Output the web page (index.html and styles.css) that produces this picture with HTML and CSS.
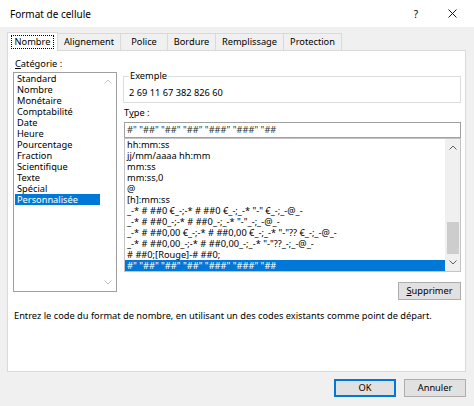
FILE: index.html
```html
<!DOCTYPE html>
<html lang="fr">
<head>
<meta charset="utf-8">
<title>Format de cellule</title>
<link rel="stylesheet" href="styles.css">
</head>
<body>
<div class="titlebar">
  <span class="title">Format de cellule</span>
  <span class="help">?</span>
  <svg class="close" width="9" height="9" viewBox="0 0 9 9"><path d="M0.5 0.5 L8.5 8.5 M8.5 0.5 L0.5 8.5" stroke="#1a1a1a" stroke-width="1" fill="none"/></svg>
</div>
<div class="tabs">
  <div class="tab active"><span class="focus">Nombre</span></div>
  <div class="tab t2">Alignement</div>
  <div class="tab t3">Police</div>
  <div class="tab t4">Bordure</div>
  <div class="tab t5">Remplissage</div>
  <div class="tab t6">Protection</div>
</div>
<div class="panel">
  <div class="top">
    <div class="leftcol">
      <div class="label"><u>C</u>atégorie :</div>
      <div class="catlist">
        <div class="catitems">
          <div class="item">Standard</div>
          <div class="item">Nombre</div>
          <div class="item">Monétaire</div>
          <div class="item">Comptabilité</div>
          <div class="item">Date</div>
          <div class="item">Heure</div>
          <div class="item">Pourcentage</div>
          <div class="item">Fraction</div>
          <div class="item">Scientifique</div>
          <div class="item">Texte</div>
          <div class="item">Spécial</div>
          <div class="item sel">Personnalisée</div>
        </div>
        <div class="vscroll light">
          <div class="arrow"><svg width="8" height="5" viewBox="0 0 8 5"><path d="M0.5 4.5 L4 1 L7.5 4.5" stroke="#c4c4c4" fill="none"/></svg></div>
          <div class="arrow"><svg width="8" height="5" viewBox="0 0 8 5"><path d="M0.5 0.5 L4 4 L7.5 0.5" stroke="#c4c4c4" fill="none"/></svg></div>
        </div>
      </div>
    </div>
    <div class="rightcol">
      <div class="example">
        <span class="legend">Exemple</span>
        <div class="sample">2 69 11 67 382 826 60</div>
      </div>
      <div class="label type">T<u>y</u>pe :</div>
      <div class="typeinput">#" "##" "##" "##" "###" "###" "##</div>
      <div class="fmtlist">
        <div class="fmtitems">
          <div class="row">hh:mm:ss</div>
          <div class="row">jj/mm/aaaa hh:mm</div>
          <div class="row">mm:ss</div>
          <div class="row">mm:ss,0</div>
          <div class="row">@</div>
          <div class="row">[h]:mm:ss</div>
          <div class="row">_-* # ##0 €_-;-* # ##0 €_-;_-* "-" €_-;_-@_-</div>
          <div class="row">_-* # ##0_-;-* # ##0_-;_-* "-"_-;_-@_-</div>
          <div class="row">_-* # ##0,00 €_-;-* # ##0,00 €_-;_-* "-"?? €_-;_-@_-</div>
          <div class="row">_-* # ##0,00_-;-* # ##0,00_-;_-* "-"??_-;_-@_-</div>
          <div class="row"># ##0;[Rouge]-# ##0;</div>
          <div class="row sel">#" "##" "##" "##" "###" "###" "##</div>
        </div>
        <div class="vscroll">
          <div class="arrow"><svg width="8" height="5" viewBox="0 0 8 5"><path d="M0.5 4.5 L4 1 L7.5 4.5" stroke="#606060" fill="none"/></svg></div>
          <div class="track"><div class="thumb"></div></div>
          <div class="arrow"><svg width="8" height="5" viewBox="0 0 8 5"><path d="M0.5 0.5 L4 4 L7.5 0.5" stroke="#606060" fill="none"/></svg></div>
        </div>
      </div>
      <div class="btnrow"><button class="btn del"><u>S</u>upprimer</button></div>
    </div>
  </div>
  <div class="desc">Entrez le code du format de nombre, en utilisant un des codes existants comme point de départ.</div>
</div>
<div class="footer">
  <button class="btn ok">OK</button>
  <button class="btn">Annuler</button>
</div>
</body>
</html>
```

FILE: styles.css
```css
* { box-sizing: border-box; }
html, body { margin: 0; padding: 0; }
body {
  width: 474px;
  height: 406px;
  overflow: hidden;
  background: #f0f0f0;
  font-family: "Noto Sans", "Open Sans", sans-serif;
  font-size: 9.25px;
  color: #000;
  line-height: 12px;
}
u { text-decoration: underline; text-underline-offset: 1px; }

.titlebar {
  height: 27px;
  background: #fff;
  display: flex;
  align-items: center;
  padding-left: 10px;
}
.title { flex: 1; font-size: 10px; }
.help { font-size: 10px; margin-right: 30px; }
.close { margin-right: 17px; }

.tabs {
  display: flex;
  align-items: flex-start;
  height: 18px;
  margin: 6px 0 -1px 7px;
  position: relative;
  z-index: 1;
}
.tab {
  height: 17px;
  border: 1px solid #d9d9d9;
  border-left: none;
  border-bottom: none;
  background: #f0f0f0;
  display: flex;
  align-items: center;
  justify-content: center;
  line-height: 12px;
}
.tab.active {
  width: 51px;
  height: 19px;
  margin-top: -1px;
  border-left: 1px solid #d9d9d9;
  background: #fff;
}
.focus {
  border: 1px dotted #000;
  padding: 0 3px;
  height: 14px;
  line-height: 12px;
}
.t2 { width: 63px; }
.t3 { width: 47px; }
.t4 { width: 48px; }
.t5 { width: 68px; }
.t6 { width: 58px; }

.panel {
  margin-left: 7px;
  width: 459px;
  height: 322px;
  background: #fff;
  border: 1px solid #d9d9d9;
}
.top {
  display: flex;
  align-items: flex-start;
  padding: 7px 0 0 5px;
}
.label { line-height: 12px; padding-left: 2px; }

.catlist {
  margin-top: 2px;
  width: 104px;
  height: 220px;
  border: 1px solid #a0a0a0;
  display: flex;
}
.catitems { width: 86px; padding-left: 1px; }
.item { height: 11px; line-height: 11px; padding-left: 2px; white-space: nowrap; }
.item.sel { background: #0078d7; color: #fff; }

.vscroll {
  width: 16px;
  display: flex;
  flex-direction: column;
  justify-content: space-between;
}
.vscroll .arrow {
  height: 17px;
  display: flex;
  align-items: center;
  justify-content: center;
}

.rightcol { margin-left: 6px; width: 338px; }
.example {
  margin-top: 18px;
  border: 1px solid #dcdcdc;
  padding-bottom: 3px;
}
.legend {
  display: block;
  width: max-content;
  margin: -7px 0 0 5px;
  padding: 0 1px;
  background: #fff;
  line-height: 12px;
}
.sample { margin-top: 5px; padding-left: 5px; line-height: 12px; }

.label.type { margin-top: 4px; padding-left: 1px; }
.typeinput {
  margin: 3px 0 0 1px;
  width: 337px;
  height: 16px;
  border: 1px solid #a0a0a0;
  padding-left: 2px;
  line-height: 14px;
  color: #333;
  white-space: nowrap;
}
.fmtlist {
  margin-left: 1px;
  width: 337px;
  height: 134px;
  border: 1px solid #c4c4c4;
  display: flex;
}
.fmtitems { width: 320px; }
.row { height: 11px; line-height: 11px; padding-left: 2px; white-space: nowrap; overflow: hidden; }
.row.sel { background: #0078d7; color: #fff; }
.fmtlist .vscroll { width: 15px; background: #f0f0f0; justify-content: flex-start; }
.track { flex: 1; padding: 66px 1px 0 2px; }
.thumb { height: 32px; background: #cdcdcd; }

.btnrow { display: flex; justify-content: flex-end; margin-top: 10px; }
.btn {
  font: inherit;
  color: #000;
  background: #e1e1e1;
  border: 1px solid #adadad;
  height: 18px;
  padding: 0;
  line-height: 14px;
  margin: 0;
}
.del { width: 63px; }

.desc { margin-top: 10px; padding-left: 6px; line-height: 12px; white-space: nowrap; }

.footer {
  display: flex;
  justify-content: flex-end;
  gap: 8px;
  padding: 7px 8px 0 0;
}
.footer .btn { width: 62px; }
.ok { border-color: #0078d7; box-shadow: inset 0 0 0 1px #0078d7; }
```
